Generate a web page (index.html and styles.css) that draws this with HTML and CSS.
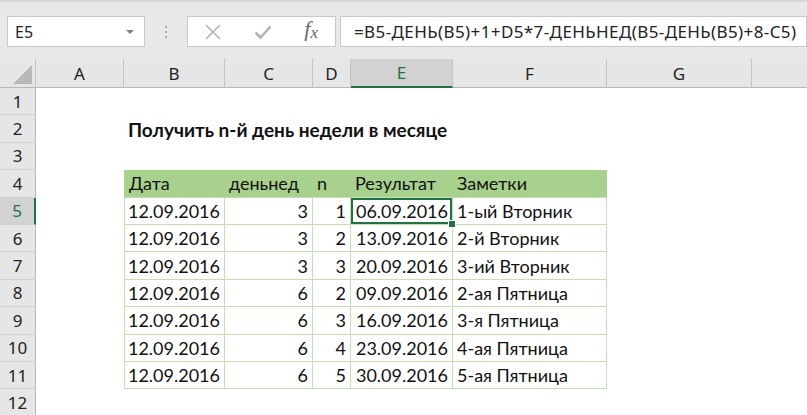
FILE: index.html
```html
<!DOCTYPE html>
<html lang="ru">
<head>
    <meta charset="UTF-8">
    <title>Получить n-й день недели в месяце</title>
    <link rel="stylesheet" href="styles.css">
</head>
<body>

<!-- строка формул -->
<div class="toolbar">
    <div class="name-box">
        <span>E5</span>
        <span class="caret"></span>
    </div>
    <div class="dots"><i></i><i></i><i></i></div>
    <div class="fx-box">
        <svg class="ico" width="18" height="18" viewBox="0 0 18 18">
            <path d="M2 2 L16 16 M16 2 L2 16" stroke="#b4b4b4" stroke-width="1.6" fill="none"/>
        </svg>
        <svg class="ico" width="18" height="18" viewBox="0 0 18 18">
            <path d="M1.5 9.5 L6.5 14.5 L16.5 3.5" stroke="#b4b4b4" stroke-width="2.6" fill="none"/>
        </svg>
        <span class="fx">f<sub>x</sub></span>
    </div>
    <div class="formula">=B5-ДЕНЬ(B5)+1+D5*7-ДЕНЬНЕД(B5-ДЕНЬ(B5)+8-C5)</div>
</div>

<!-- лист -->
<div class="sheet">
    <!-- заголовки столбцов -->
    <div class="ch corner"><span class="tri"></span></div>
    <div class="ch">A</div>
    <div class="ch">B</div>
    <div class="ch">C</div>
    <div class="ch">D</div>
    <div class="ch sel">E</div>
    <div class="ch">F</div>
    <div class="ch">G</div>
    <div class="ch last"></div>

    <!-- 1 -->
    <div class="rh">1</div>
    <div></div><div></div><div></div><div></div><div></div><div></div><div></div><div></div>

    <!-- 2 -->
    <div class="rh">2</div>
    <div></div>
    <div class="title">Получить n-й день недели в месяце</div>
    <div></div><div></div><div></div><div></div><div></div><div></div>

    <!-- 3 -->
    <div class="rh">3</div>
    <div></div><div></div><div></div><div></div><div></div><div></div><div></div><div></div>

    <!-- 4 -->
    <div class="rh">4</div>
    <div></div>
    <div class="c hd first">Дата</div>
    <div class="c hd">деньнед</div>
    <div class="c hd">n</div>
    <div class="c hd">Результат</div>
    <div class="c hd">Заметки</div>
    <div></div><div></div>

    <!-- 5 -->
    <div class="rh sel">5</div>
    <div></div>
    <div class="c r first">12.09.2016</div>
    <div class="c r">3</div>
    <div class="c r">1</div>
    <div class="c r active">06.09.2016</div>
    <div class="c">1-ый Вторник</div>
    <div></div><div></div>

    <!-- 6 -->
    <div class="rh">6</div>
    <div></div>
    <div class="c r first">12.09.2016</div>
    <div class="c r">3</div>
    <div class="c r">2</div>
    <div class="c r">13.09.2016</div>
    <div class="c">2-й Вторник</div>
    <div></div><div></div>

    <!-- 7 -->
    <div class="rh">7</div>
    <div></div>
    <div class="c r first">12.09.2016</div>
    <div class="c r">3</div>
    <div class="c r">3</div>
    <div class="c r">20.09.2016</div>
    <div class="c">3-ий Вторник</div>
    <div></div><div></div>

    <!-- 8 -->
    <div class="rh">8</div>
    <div></div>
    <div class="c r first">12.09.2016</div>
    <div class="c r">6</div>
    <div class="c r">2</div>
    <div class="c r">09.09.2016</div>
    <div class="c">2-ая Пятница</div>
    <div></div><div></div>

    <!-- 9 -->
    <div class="rh">9</div>
    <div></div>
    <div class="c r first">12.09.2016</div>
    <div class="c r">6</div>
    <div class="c r">3</div>
    <div class="c r">16.09.2016</div>
    <div class="c">3-я Пятница</div>
    <div></div><div></div>

    <!-- 10 -->
    <div class="rh">10</div>
    <div></div>
    <div class="c r first">12.09.2016</div>
    <div class="c r">6</div>
    <div class="c r">4</div>
    <div class="c r">23.09.2016</div>
    <div class="c">4-ая Пятница</div>
    <div></div><div></div>

    <!-- 11 -->
    <div class="rh">11</div>
    <div></div>
    <div class="c r first">12.09.2016</div>
    <div class="c r">6</div>
    <div class="c r">5</div>
    <div class="c r">30.09.2016</div>
    <div class="c">5-ая Пятница</div>
    <div></div><div></div>

    <!-- 12 -->
    <div class="rh">12</div>
    <div></div><div></div><div></div><div></div><div></div><div></div><div></div><div></div>
</div>

</body>
</html>
```

FILE: styles.css
```css
/* общий вид */
body {
    margin: 0;
    width: 807px;
    height: 415px;
    overflow: hidden;
    background: #fff;
    font-family: Lato, "Open Sans", sans-serif;
}

/* строка формул */
.toolbar {
    height: 59px;
    box-sizing: border-box;
    border-top: 2px solid #d6d6d6;
    background: #e8e8e8;
    display: flex;
    align-items: flex-start;
    padding: 14px 0 0 7px;
    font-family: "Noto Sans", sans-serif;
    font-size: 16px;
    color: #222;
}
.name-box, .fx-box, .formula {
    height: 31px;
    box-sizing: border-box;
    background: #fff;
    border: 1px solid #c8c8c8;
    display: flex;
    align-items: center;
}
.name-box {
    width: 138px;
    padding: 0 10px 0 7px;
    justify-content: space-between;
}
.caret {
    width: 0;
    height: 0;
    border-left: 4px solid transparent;
    border-right: 4px solid transparent;
    border-top: 4px solid #808080;
}
.dots {
    width: 42px;
    height: 31px;
    display: flex;
    flex-direction: column;
    align-items: center;
    justify-content: center;
    gap: 3px;
}
.dots i {
    width: 2px;
    height: 2px;
    background: #a8a8a8;
}
.fx-box {
    width: 149px;
    padding: 0 17px 0 16px;
    justify-content: space-between;
}
.fx {
    font-family: "Liberation Serif", serif;
    font-style: italic;
    font-size: 22px;
    color: #666;
    line-height: 1;
    margin-top: -4px;
}
.fx sub {
    font-size: 17px;
    vertical-align: -2px;
}
.formula {
    flex: 1;
    margin-left: 4px;
    padding-left: 13px;
    white-space: nowrap;
    font-size: 17px;
    letter-spacing: 0.4px;
}

/* сетка листа */
.sheet {
    display: grid;
    grid-template-columns: 36px 88px 101px 88px 38px 102px 154px 145px 55px;
    grid-template-rows: 29px repeat(12, 27.4px);
    font-size: 18px;
    color: #111;
}
.sheet > div {
    box-sizing: border-box;
    white-space: nowrap;
    display: flex;
    align-items: center;
}

/* заголовки */
.ch {
    background: #e6e6e6;
    border-right: 1px solid #c4c4c4;
    border-bottom: 1px solid #b8b8b8;
    justify-content: center;
    font-family: "Noto Sans", sans-serif;
    font-size: 17px;
    color: #222;
}
.ch.last {
    border-right: none;
}
.ch.sel {
    background: #d2d2d2;
    color: #217346;
    border-bottom: 2px solid #217346;
}
.corner {
    position: relative;
}
.tri {
    position: absolute;
    right: 3px;
    bottom: 3px;
    width: 0;
    height: 0;
    border-left: 19px solid transparent;
    border-bottom: 19px solid #b8b8b8;
}
.rh {
    background: #e6e6e6;
    border-right: 1px solid #b8b8b8;
    border-bottom: 1px solid #d2d2d2;
    justify-content: center;
    font-family: "Noto Sans", sans-serif;
    font-size: 17px;
    color: #222;
}
.rh.sel {
    background: #d2d2d2;
    color: #217346;
    border-right: 2px solid #217346;
}

/* заголовок таблицы */
.title {
    font-weight: bold;
    font-size: 19px;
    padding-left: 4px;
    overflow: visible;
}

/* ячейки таблицы */
.c {
    border-right: 1px solid #c6deb3;
    border-bottom: 1px solid #c6deb3;
    padding: 0 4px;
}
.c.first {
    border-left: 1px solid #c6deb3;
}
.c.hd {
    background: #a9d18e;
    border-color: #a9d18e;
    border-bottom-color: #c6deb3;
}
.c.r {
    justify-content: flex-end;
}
.c.active {
    position: relative;
    box-shadow: inset 0 0 0 2px #217346;
}
.c.active::after {
    content: "";
    position: absolute;
    right: -4px;
    bottom: -4px;
    width: 6px;
    height: 6px;
    background: #217346;
    border: 1px solid #fff;
    z-index: 1;
}
```
